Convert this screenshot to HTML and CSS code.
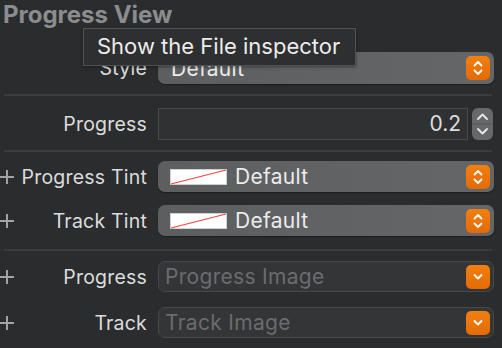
FILE: index.html
```html
<!DOCTYPE html>
<html lang="en">
<head>
  <meta charset="UTF-8">
  <title>Progress View</title>
  <link rel="stylesheet" href="styles.css">
</head>
<body>
  <div class="panel">
    <h2 class="title">Progress View</h2>

    <div class="row row-first">
      <div class="label"><span>Style</span></div>
      <div class="popup">
        <span class="popup-text">Default</span>
        <span class="arrows">
          <svg width="10" height="16" viewBox="0 0 10 16"><path d="M1.5 5.5 L5 2 L8.5 5.5 M1.5 10.5 L5 14 L8.5 10.5" fill="none" stroke="#fff" stroke-width="1.8" stroke-linecap="round" stroke-linejoin="round"/></svg>
        </span>
      </div>
    </div>

    <div class="sep sep-1"></div>

    <div class="row">
      <div class="label"><span>Progress</span></div>
      <div class="field-wrap">
        <div class="field">0.2</div>
        <div class="stepper">
          <svg width="21" height="32" viewBox="0 0 21 32"><path d="M6 11 L10.5 6.5 L15 11 M6 21 L10.5 25.5 L15 21" fill="none" stroke="#e8e8e8" stroke-width="1.8" stroke-linecap="round" stroke-linejoin="round"/><line x1="0" y1="16" x2="21" y2="16" stroke="#555658" stroke-width="1"/></svg>
        </div>
      </div>
    </div>

    <div class="sep sep-2"></div>

    <div class="row">
      <div class="label plus-label"><span class="plus"></span><span>Progress Tint</span></div>
      <div class="popup tint">
        <svg class="swatch" width="57" height="16" viewBox="0 0 57 16"><rect x="0.5" y="0.5" width="56" height="15" fill="#fff" stroke="#d0d0d0"/><line x1="1" y1="15" x2="56" y2="1" stroke="#f0453a" stroke-width="1.2"/></svg>
        <span class="popup-text">Default</span>
        <span class="arrows">
          <svg width="10" height="16" viewBox="0 0 10 16"><path d="M1.5 5.5 L5 2 L8.5 5.5 M1.5 10.5 L5 14 L8.5 10.5" fill="none" stroke="#fff" stroke-width="1.8" stroke-linecap="round" stroke-linejoin="round"/></svg>
        </span>
      </div>
    </div>

    <div class="row row-gap">
      <div class="label plus-label"><span class="plus"></span><span>Track Tint</span></div>
      <div class="popup tint">
        <svg class="swatch" width="57" height="16" viewBox="0 0 57 16"><rect x="0.5" y="0.5" width="56" height="15" fill="#fff" stroke="#d0d0d0"/><line x1="1" y1="15" x2="56" y2="1" stroke="#f0453a" stroke-width="1.2"/></svg>
        <span class="popup-text">Default</span>
        <span class="arrows">
          <svg width="10" height="16" viewBox="0 0 10 16"><path d="M1.5 5.5 L5 2 L8.5 5.5 M1.5 10.5 L5 14 L8.5 10.5" fill="none" stroke="#fff" stroke-width="1.8" stroke-linecap="round" stroke-linejoin="round"/></svg>
        </span>
      </div>
    </div>

    <div class="sep sep-3"></div>

    <div class="row">
      <div class="label plus-label"><span class="plus"></span><span>Progress</span></div>
      <div class="popup disabled">
        <span class="popup-text">Progress Image</span>
        <span class="arrows">
          <svg width="10" height="8" viewBox="0 0 10 8"><path d="M1.5 2 L5 5.5 L8.5 2" fill="none" stroke="#fff" stroke-width="1.8" stroke-linecap="round" stroke-linejoin="round"/></svg>
        </span>
      </div>
    </div>

    <div class="row row-last">
      <div class="label plus-label"><span class="plus"></span><span>Track</span></div>
      <div class="popup disabled">
        <span class="popup-text">Track Image</span>
        <span class="arrows">
          <svg width="10" height="8" viewBox="0 0 10 8"><path d="M1.5 2 L5 5.5 L8.5 2" fill="none" stroke="#fff" stroke-width="1.8" stroke-linecap="round" stroke-linejoin="round"/></svg>
        </span>
      </div>
    </div>

    <div class="tooltip">Show the File inspector</div>
  </div>
</body>
</html>
```

FILE: styles.css
```css
body {
  margin: 0;
  background: #2b2c2e;
  font-family: Inter, "Noto Sans", sans-serif;
  color: #dedede;
  overflow: hidden;
}
.panel {
  position: relative;
  width: 502px;
  height: 348px;
}
.title {
  margin: 0;
  padding: 0 0 0 3px;
  height: 52px;
  box-sizing: border-box;
  font-size: 24px;
  line-height: 30px;
  font-weight: 700;
  color: #8b8c8d;
}
.row {
  display: grid;
  grid-template-columns: 147px 336px;
  column-gap: 11px;
  align-items: center;
  height: 31px;
}
.row-first {
  height: 32px;
}
.row-gap {
  margin-top: 13px;
}
.row-last {
  margin-top: 15px;
}
.label {
  display: flex;
  justify-content: flex-end;
  align-items: center;
  font-size: 19.5px;
  letter-spacing: 0.2px;
  color: #dcdcdc;
  white-space: nowrap;
}
.plus-label {
  justify-content: space-between;
}
.plus {
  position: relative;
  width: 14px;
  height: 14px;
}
.plus::before, .plus::after {
  content: "";
  position: absolute;
  background: #a3a3a3;
}
.plus::before {
  left: 0;
  top: 6px;
  width: 14px;
  height: 2px;
}
.plus::after {
  left: 6px;
  top: 0;
  width: 2px;
  height: 14px;
}
.sep {
  margin: 0 10px 0 4px;
  height: 2px;
  background: #3b3c3e;
}
.sep-1 {
  margin-top: 10px;
  margin-bottom: 12px;
}
.sep-2 {
  margin-top: 11px;
  margin-bottom: 9px;
}
.sep-3 {
  margin-top: 13px;
  margin-bottom: 10px;
}
.popup {
  display: flex;
  align-items: center;
  height: 100%;
  box-sizing: border-box;
  padding: 0 4px 0 13px;
  border-radius: 7px;
  background: linear-gradient(to right, #5d5e5f, #656667);
  box-shadow: 0 1px 1px rgba(0, 0, 0, 0.35);
  font-size: 21px;
  letter-spacing: 0.3px;
  color: #ececec;
}
.tint {
  padding-left: 12px;
}
.swatch {
  margin-right: 8px;
  flex: none;
}
.popup-text {
  flex: 1;
  white-space: nowrap;
}
.arrows {
  display: flex;
  align-items: center;
  justify-content: center;
  width: 24px;
  height: 24px;
  border-radius: 5px;
  background: linear-gradient(#f27f10, #e36b05);
}
.disabled {
  background: #343537;
  border: 1px solid #47484a;
  box-shadow: none;
  padding-left: 6px;
  padding-right: 3px;
  color: #6b6c6e;
}
.field-wrap {
  display: flex;
  gap: 4px;
  height: 32px;
}
.field {
  width: 310px;
  box-sizing: border-box;
  border: 1px solid #48494b;
  background: #303133;
  font-size: 21px;
  text-align: right;
  padding: 0 6px;
  line-height: 30px;
  color: #dcdcdc;
}
.stepper {
  width: 21px;
  height: 32px;
  border-radius: 6px;
  background: #67686a;
}
.stepper svg {
  display: block;
}
.tooltip {
  position: absolute;
  left: 83px;
  top: 28px;
  width: 273px;
  height: 38px;
  box-sizing: border-box;
  padding-left: 13px;
  border: 1px solid #505153;
  background: #2e2f31;
  font-size: 22px;
  line-height: 35px;
  color: #ececec;
  box-shadow: 0 1px 3px rgba(0, 0, 0, 0.4);
}
```
